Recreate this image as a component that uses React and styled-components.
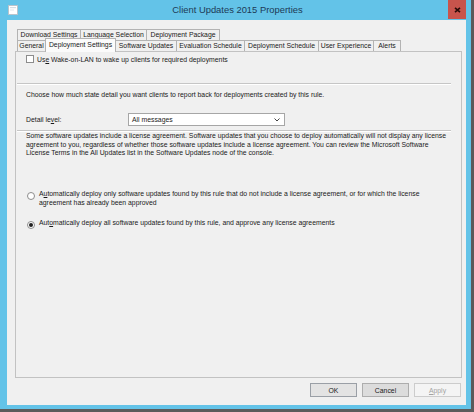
import styled, { createGlobalStyle } from "styled-components"

const GlobalStyle = createGlobalStyle`
  html, body {
    margin: 0;
    padding: 0;
  }
  body {
    width: 474px;
    height: 412px;
    overflow: hidden;
    background: #ffffff;
    font-family: "Liberation Sans", Arial, sans-serif;
  }
`

const rowOne = [
  { label: "Download Settings", width: 64 },
  { label: "Language Selection", width: 67 },
  { label: "Deployment Package", width: 74 },
]

const rowTwo = [
  { label: "General", width: 29 },
  { label: "Deployment Settings", width: 71, active: true },
  { label: "Software Updates", width: 62 },
  { label: "Evaluation Schedule", width: 69 },
  { label: "Deployment Schedule", width: 75 },
  { label: "User Experience", width: 56 },
  { label: "Alerts", width: 28 },
]

export default function App() {
  return (
    <>
      <GlobalStyle />
      <Window>
        <TitleBar>
          <AppIcon viewBox="0 0 10 10">
            <rect x="0.5" y="0.5" width="9" height="9" fill="#ffffff" stroke="#b9c4cc" />
            <rect x="2" y="2" width="6" height="1.2" fill="#d6dde3" />
            <rect x="2" y="4.5" width="4" height="1" fill="#e2e7eb" />
          </AppIcon>
          <Title>Client Updates 2015 Properties</Title>
          <CloseButton>
            <svg width="7" height="6" viewBox="0 0 7 6">
              <path d="M1 0.8 L6 5.2 M6 0.8 L1 5.2" stroke="#2a0b08" strokeWidth="1.6" />
            </svg>
          </CloseButton>
        </TitleBar>

        <Client>
          <TabStrip>
            <TabRow>
              {rowOne.map((t) => (
                <Tab key={t.label} $w={t.width}>{t.label}</Tab>
              ))}
            </TabRow>
            <TabRow>
              {rowTwo.map((t) => (
                <Tab key={t.label} $w={t.width} $active={t.active}>{t.label}</Tab>
              ))}
            </TabRow>
          </TabStrip>

          <Panel>
            <CheckRow>
              <CheckBox />
              <Label>Us<Key>e</Key> Wake-on-LAN to wake up clients for required deployments</Label>
            </CheckRow>

            <Separator $top={20} />

            <Text $top={5}>
              Choose how much state detail you want clients to report back for deployments created by this rule.
            </Text>

            <DetailRow>
              <FieldLabel>Detail le<Key>v</Key>el:</FieldLabel>
              <Select>
                <span>All messages</span>
                <svg width="6" height="4" viewBox="0 0 6 4">
                  <path d="M0.5 0.5 L3 3 L5.5 0.5" fill="none" stroke="#444" strokeWidth="1" />
                </svg>
              </Select>
            </DetailRow>

            <Separator $top={4} />

            <Paragraph>
              Some software updates include a license agreement.  Software updates that you choose to deploy automatically will not display any license
              <br />
              agreement to you, regardless of whether those software updates include a license agreement. You can review the Microsoft Software
              <br />
              License Terms in the All Updates list in the Software Updates node of the console.
            </Paragraph>

            <RadioOption $top={32}>
              <Radio />
              <OptionText>
                A<Key>u</Key>tomatically deploy only software updates found by this rule that do not include a license agreement, or for which the license
                <br />
                agreement has already been approved
              </OptionText>
            </RadioOption>

            <RadioOption $top={12}>
              <Radio $checked />
              <OptionText>
                Aut<Key>o</Key>matically deploy all software updates found by this rule, and approve any license agreements
              </OptionText>
            </RadioOption>
          </Panel>

          <Footer>
            <Button $default>OK</Button>
            <Button $pressed>Cancel</Button>
            <Button disabled><Key>A</Key>pply</Button>
          </Footer>
        </Client>
      </Window>
    </>
  )
}

const Window = styled.div`
  box-sizing: border-box;
  width: 474px;
  height: 412px;
  display: flex;
  flex-direction: column;
  background: #63c3e8;
  border-right: 3px solid #5b5b5b;
  border-bottom: 3px solid #5b5b5b;
  padding: 0 5px 4px 7px;
`

const TitleBar = styled.div`
  height: 20px;
  display: flex;
  align-items: flex-start;
`

const AppIcon = styled.svg`
  width: 10px;
  height: 10px;
  margin: 5px 0 0 1px;
  flex: none;
`

const Title = styled.div`
  flex: 1;
  padding-left: 9px;
  text-align: center;
  font-size: 9.4px;
  line-height: 20px;
  color: #1d3a56;
`

const CloseButton = styled.div`
  width: 18px;
  height: 19px;
  flex: none;
  display: flex;
  align-items: center;
  justify-content: center;
  background: #c8544c;
`

const Client = styled.div`
  flex: 1;
  display: flex;
  flex-direction: column;
  background: #f0f0f0;
  padding: 9px 4px 0 8px;
  font-size: 6.85px;
  color: #1a1a1a;
`

const TabStrip = styled.div`
  padding-left: 2px;
`

const TabRow = styled.div`
  display: flex;
  height: 11px;
  align-items: flex-start;
`

const Tab = styled.div`
  box-sizing: border-box;
  width: ${(p) => p.$w}px;
  height: ${(p) => (p.$active ? 14 : 11)}px;
  margin-top: ${(p) => (p.$active ? -2 : 0)}px;
  border: 1px solid #b3b3b3;
  border-bottom: none;
  margin-right: -1px;
  background: ${(p) => (p.$active ? "#fbfbfb" : "#f0f0f0")};
  position: ${(p) => (p.$active ? "relative" : "static")};
  z-index: ${(p) => (p.$active ? 2 : "auto")};
  text-align: center;
  line-height: ${(p) => (p.$active ? 11 : 10)}px;
  white-space: nowrap;
  color: #1a1a1a;
`

const Panel = styled.div`
  box-sizing: border-box;
  height: 327px;
  border: 1px solid #c2c2c2;
  background: #f0f0f0;
  padding: 0 0 0 10px;
  display: flex;
  flex-direction: column;
`

const Key = styled.span`
  text-decoration: underline;
`

const CheckRow = styled.div`
  display: flex;
  align-items: center;
  margin-top: 3px;
  height: 8px;
  gap: 3px;
`

const CheckBox = styled.div`
  box-sizing: border-box;
  width: 8px;
  height: 8px;
  border: 1px solid #8c8c8c;
  background: #ffffff;
`

const Label = styled.span`
  white-space: nowrap;
  line-height: 9px;
`

const Separator = styled.div`
  margin: ${(p) => p.$top}px 10px 0 -9px;
  height: 0;
  border-top: 1px solid #c6c6c6;
  border-bottom: 1px solid #ffffff;
`

const Text = styled.div`
  margin-top: ${(p) => p.$top}px;
  line-height: 9px;
  white-space: nowrap;
`

const DetailRow = styled.div`
  display: flex;
  align-items: center;
  margin-top: 14px;
  height: 13px;
`

const FieldLabel = styled.span`
  width: 102px;
  flex: none;
`

const Select = styled.div`
  box-sizing: border-box;
  width: 157px;
  height: 13px;
  border: 1px solid #a6a6a6;
  background: #ffffff;
  display: flex;
  align-items: center;
  justify-content: space-between;
  padding: 0 4px 0 3px;
`

const Paragraph = styled.div`
  margin-top: 0;
  line-height: 8.7px;
  white-space: nowrap;
`

const RadioOption = styled.div`
  display: flex;
  align-items: flex-start;
  margin-top: ${(p) => p.$top}px;
  padding-left: 1px;
`

const Radio = styled.div`
  box-sizing: border-box;
  width: 8px;
  height: 8px;
  margin-top: 2px;
  flex: none;
  border-radius: 50%;
  border: 1px solid #8c8c8c;
  background: #ffffff;
  display: flex;
  align-items: center;
  justify-content: center;

  &::after {
    content: "";
    width: 4px;
    height: 4px;
    border-radius: 50%;
    background: ${(p) => (p.$checked ? "#222222" : "transparent")};
  }
`

const OptionText = styled.div`
  margin-left: 4px;
  line-height: 8.5px;
  white-space: nowrap;
`

const Footer = styled.div`
  display: flex;
  justify-content: flex-end;
  gap: 5px;
  padding: 5px 1px 0 0;
`

const Button = styled.button`
  box-sizing: border-box;
  width: 47px;
  height: 14px;
  padding: 0;
  font-family: inherit;
  font-size: 6.85px;
  color: ${(p) => (p.disabled ? "#a3a3a3" : "#1a1a1a")};
  border: 1px solid ${(p) => (p.disabled ? "#cccccc" : p.$default ? "#9a9fa6" : "#adadad")};
  background: ${(p) => (p.disabled ? "#f4f4f4" : p.$pressed ? "#dcdcdc" : "#e3e3e3")};
`
